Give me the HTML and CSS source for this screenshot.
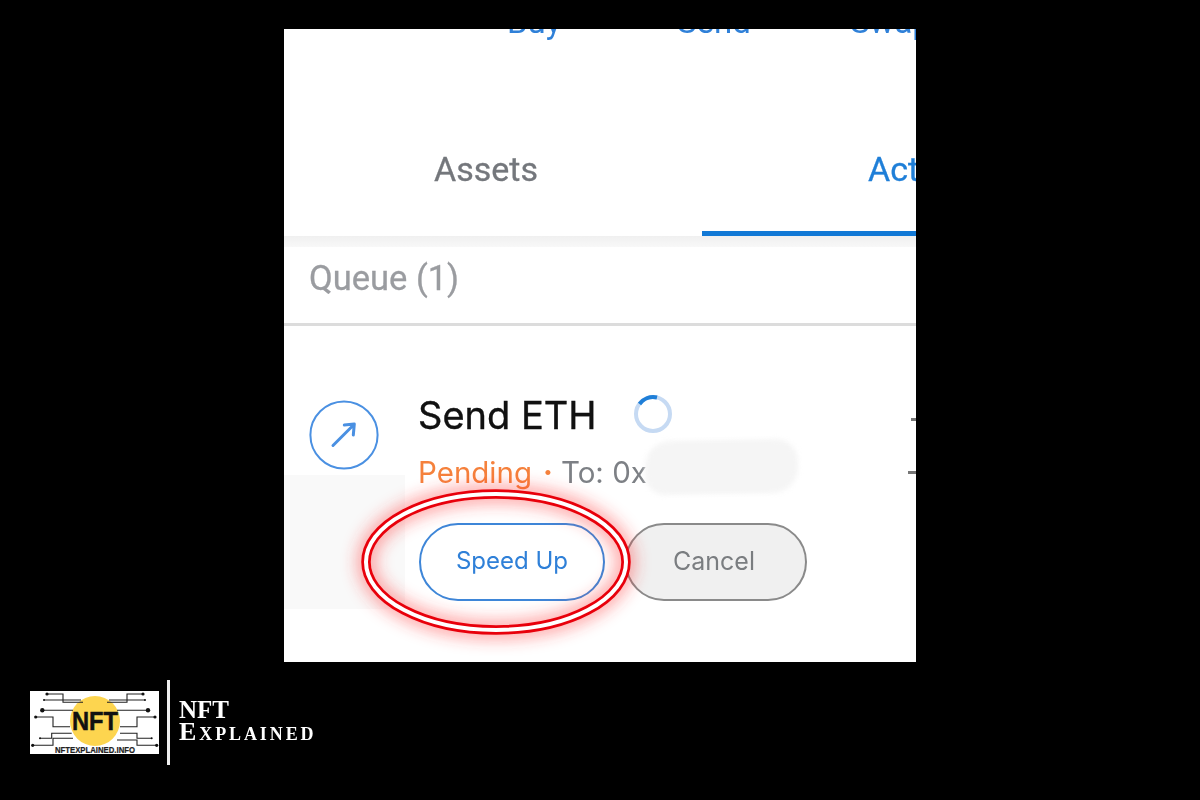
FILE: index.html
```html
<!DOCTYPE html>
<html lang="en">
<head>
<meta charset="utf-8">
<title>Speed Up a pending transaction</title>
<link rel="stylesheet" href="styles.css">
</head>
<body>
<main class="stage">
  <section class="panel">
    <div class="actions">
      <span class="action-buy">Buy</span>
      <span class="action-send">Send</span>
      <span class="action-swap">Swap</span>
    </div>
    <div class="tabs">
      <div class="tab tab-assets">Assets</div>
      <div class="tab tab-activity">Activity</div>
    </div>
    <div class="divider-band"></div>
    <div class="queue">Queue (1)</div>
    <div class="tx">
      <svg class="tx-icon" viewBox="0 0 70 70" aria-hidden="true">
        <circle cx="35" cy="35" r="33.600" fill="none" stroke="#4a90e2" stroke-width="2"/>
        <path d="M24 45.500 L45 24.500 M35.300 25 L45.300 24 L44.300 35" fill="none" stroke="#4a90e2" stroke-width="3" stroke-linecap="round" stroke-linejoin="round"/>
      </svg>
      <div class="tx-body">
        <div class="tx-title-row">
          <span class="tx-title">Send ETH</span>
          <svg class="spinner" viewBox="0 0 40 40" aria-hidden="true">
            <circle cx="20" cy="20" r="17" fill="none" stroke="#c6daf3" stroke-width="4"/>
            <path d="M6.500 10 A17 17 0 0 1 24 3.500" fill="none" stroke="#1f7fd8" stroke-width="4"/>
          </svg>
          <span class="dash dash-top"></span>
        </div>
        <div class="tx-sub-row">
          <span class="tx-pending">Pending</span>
          <span class="tx-dot">·</span>
          <span class="tx-to">To: 0x</span>
          <span class="dash dash-bottom"></span>
        </div>
        <div class="tx-buttons">
          <button class="btn btn-speed">Speed Up</button>
          <button class="btn btn-cancel">Cancel</button>
        </div>
      </div>
    </div>
    <div class="patch-left"></div>
    <div class="smudge"></div>
    <svg class="callout" viewBox="0 0 320 190" aria-hidden="true">
      <defs>
        <filter id="glow" x="-30%" y="-30%" width="160%" height="160%">
          <feGaussianBlur stdDeviation="9"/>
        </filter>
      </defs>
      <ellipse cx="160" cy="96" rx="130" ry="68" fill="none" stroke="#ff2a2a" stroke-width="14" opacity=".55" filter="url(#glow)"/>
      <ellipse cx="160" cy="96" rx="130" ry="68" fill="none" stroke="#e8000b" stroke-width="9.500"/>
      <ellipse cx="160" cy="96" rx="130" ry="68" fill="none" stroke="#fff" stroke-width="4"/>
    </svg>
  </section>
</main>
<footer class="brand">
  <svg class="brand-logo" viewBox="0 0 129 63" role="img" aria-label="NFT Explained logo">
    <rect width="129" height="63" fill="#fff"/>
    <circle cx="65" cy="30" r="25" fill="#fdd54f"/>
    <g class="logo-lines">
      <path d="M17 3H33V11.300H53M14 9H51"/>
      <path d="M113 3H97V11.300H77M115 9H79"/>
      <path d="M12.300 19.300H43M118 19.300H87"/>
      <path d="M5.700 26H23V35.700H40M125 26H107V35.700H90"/>
      <path d="M10 47.300H21.700V42.300H41.700M121.700 47.300H107V42.300H90"/>
      <path d="M2.700 54.300H23V47.300H43M126.700 54.300H107V49H87"/>
    </g>
    <g class="logo-dots">
      <circle cx="17" cy="3" r="1.600"/><circle cx="113" cy="3" r="1.600"/>
      <circle cx="14" cy="9" r="1"/><circle cx="115" cy="9" r="1"/>
      <circle cx="12.300" cy="19.300" r="2.200"/><circle cx="118" cy="19.300" r="2.200"/>
      <circle cx="5.700" cy="26" r="1.600"/><circle cx="125" cy="26" r="1.600"/>
      <circle cx="10" cy="47.300" r="1"/><circle cx="121.700" cy="47.300" r="1"/>
      <circle cx="2.700" cy="54.300" r="1.600"/><circle cx="126.700" cy="54.300" r="1.600"/>
    </g>
    <text class="logo-nft" x="65" y="39" text-anchor="middle" textLength="46" lengthAdjust="spacingAndGlyphs">NFT</text>
    <text class="logo-url" x="65" y="62" text-anchor="middle" textLength="80" lengthAdjust="spacingAndGlyphs">NFTEXPLAINED.INFO</text>
  </svg>
  <div class="brand-rule"></div>
  <div class="brand-name">
    <div class="brand-nft">NFT</div>
    <div class="brand-explained">Explained</div>
  </div>
</footer>
</body>
</html>
```

FILE: styles.css
```css
* { box-sizing: border-box; }

html, body {
  margin: 0;
  height: 800px;
  background: #000;
  overflow: hidden;
}

body {
  display: flex;
  flex-direction: column;
  font-family: "Inter", "Liberation Sans", sans-serif;
}

.stage {
  display: flex;
  justify-content: center;
  padding-top: 29px;
}

.panel {
  position: relative;
  width: 632px;
  height: 633px;
  background: #fff;
  overflow: hidden;
  filter: blur(0.4px);
}

.actions {
  display: flex;
  height: 105px;
  margin-top: -26px;
  margin-bottom: 26px;
  padding-left: 223px;
  font-family: "Roboto", sans-serif;
  font-size: 33px;
  line-height: 38px;
  color: #2f80d8;
  white-space: nowrap;
}

.action-buy { flex: none; width: 170px; }
.action-send { flex: none; width: 173px; }
.action-swap { flex: none; }

.tabs {
  display: flex;
  height: 102px;
  width: 836px;
  font-family: "Roboto", sans-serif;
  font-size: 34px;
  line-height: 44px;
  -webkit-text-stroke: 0.3px currentColor;
}

.tab {
  width: 418px;
  padding-top: 13px;
  white-space: nowrap;
}

.tab-assets {
  padding-left: 150px;
  color: #74777c;
}

.tab-activity {
  padding-left: 166px;
  color: #1f7fd8;
  border-bottom: 5px solid #1279d6;
}

.divider-band {
  height: 11px;
  background: linear-gradient(#f0f0f0, #f8f8f8);
}

.queue {
  display: flex;
  align-items: center;
  height: 79px;
  padding: 0 0 14px 25px;
  border-bottom: 3px solid #dcdcdc;
  font-family: "Roboto", sans-serif;
  font-size: 34.500px;
  color: #9a9ca0;
  -webkit-text-stroke: 0.3px currentColor;
}

.tx {
  display: flex;
  padding-left: 25px;
}

.tx-icon {
  flex: none;
  width: 70px;
  height: 70px;
  margin-top: 74px;
  margin-right: 40px;
}

.tx-body {
  flex: 1;
  min-width: 0;
  padding-top: 64px;
}

.tx-title-row {
  display: flex;
  align-items: center;
  height: 50px;
}

.tx-title {
  margin-left: -1px;
  font-size: 38px;
  line-height: 50px;
  color: #111;
  -webkit-text-stroke: 0.4px currentColor;
}

.spinner {
  width: 40px;
  height: 40px;
  margin-left: 36px;
  margin-top: -2px;
}

.dash {
  height: 3px;
  background: #777;
  margin-left: auto;
}

.dash-top { width: 5px; margin-top: 8px; }
.dash-bottom { width: 8px; margin-top: 0; }

.tx-sub-row {
  display: flex;
  align-items: center;
  height: 50px;
  margin-top: 7px;
  font-size: 29.500px;
  white-space: nowrap;
}

.tx-pending { margin-left: -1px; color: #f5813c; }
.tx-dot { margin: 0 8px 0 11px; color: #f5813c; font-weight: 700; }
.tx-to { color: #7d8085; }

.tx-buttons {
  display: flex;
  gap: 20px;
  margin-top: 26px;
}

.btn {
  height: 78px;
  padding: 0 0 3px;
  border-radius: 39px;
  font-family: inherit;
  font-size: 24px;
  background: #fff;
}

.btn-speed {
  width: 186px;
  border: 2px solid #3e86d8;
  color: #2f80d8;
}

.btn-cancel {
  width: 182px;
  padding-right: 4px;
  border: 2px solid #8a8a8a;
  background: #f0f0f0;
  color: #7a7d80;
  font-size: 25px;
}

.patch-left {
  position: absolute;
  left: 0;
  top: 446px;
  width: 121px;
  height: 134px;
  background: #f9f9f9;
}

.smudge {
  position: absolute;
  left: 361px;
  top: 411px;
  width: 153px;
  height: 54px;
  border-radius: 26px 22px 26px 20px;
  background: #f5f5f5;
  filter: blur(2.500px);
  transform: rotate(-1deg);
}

.callout {
  position: absolute;
  left: 52px;
  top: 437px;
  width: 320px;
  height: 190px;
}

.brand {
  display: flex;
  align-items: center;
  height: 85px;
  margin-top: 18px;
  padding-left: 30px;
  filter: blur(0.4px);
}

.brand-logo {
  width: 129px;
  height: 63px;
  flex: none;
}

.logo-lines path {
  fill: none;
  stroke: #222;
  stroke-width: 1.100;
}

.logo-dots circle { fill: #111; }

.logo-nft {
  font-family: "Liberation Sans", sans-serif;
  font-weight: 700;
  font-size: 26px;
  fill: #111;
  stroke: #111;
  stroke-width: 0.5;
}

.logo-url {
  font-family: "Liberation Sans", sans-serif;
  font-weight: 700;
  font-size: 8.500px;
  fill: #222;
  stroke: #222;
  stroke-width: 0.2;
}

.brand-rule {
  width: 3px;
  height: 85px;
  margin: 0 9px 0 8px;
  background: #eee;
}

.brand-name {
  display: flex;
  flex-direction: column;
  padding-bottom: 4px;
  font-family: "Liberation Serif", serif;
  font-weight: 700;
  color: #fff;
  line-height: 22px;
}

.brand-nft {
  font-size: 25px;
}

.brand-explained {
  font-size: 26px;
  font-variant: small-caps;
  letter-spacing: 2.900px;
  white-space: nowrap;
}
```
